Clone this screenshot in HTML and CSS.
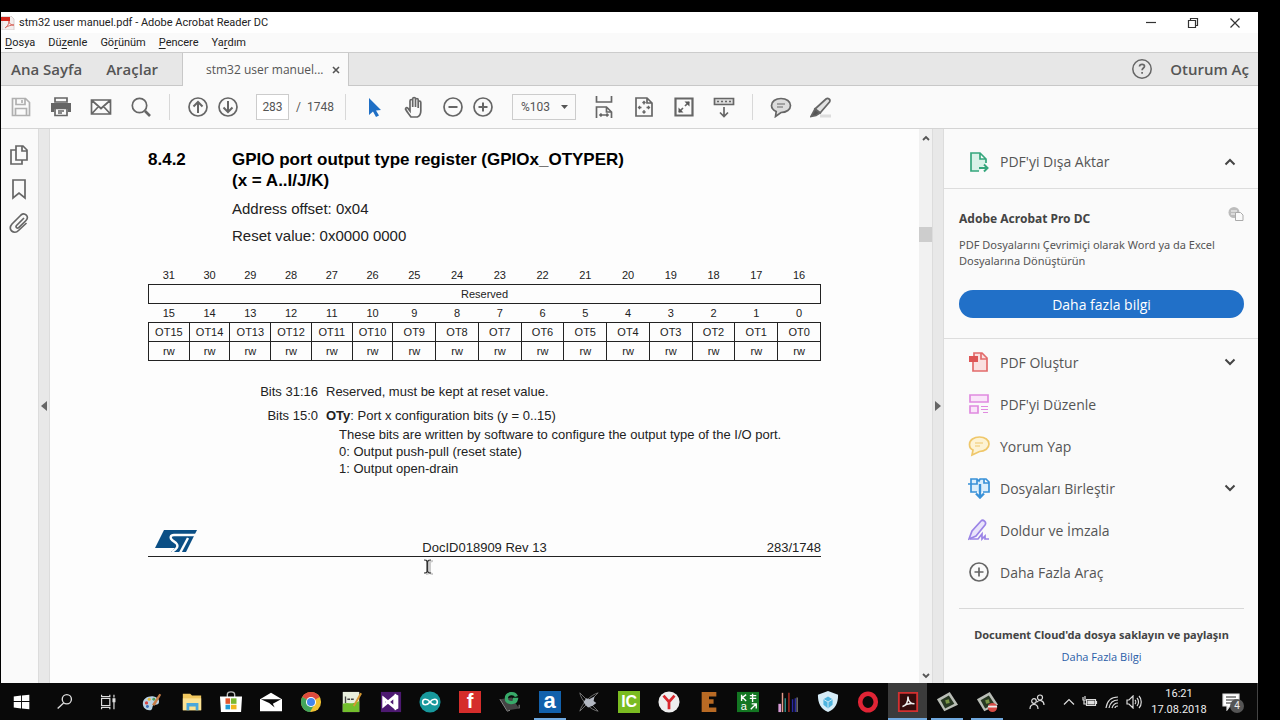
FILE: index.html
```html
<!DOCTYPE html>
<html lang="tr">
<head>
<meta charset="utf-8">
<title>stm32 user manuel.pdf - Adobe Acrobat Reader DC</title>
<link rel="stylesheet" href="styles.css">
</head>
<body>
<div class="window">
  <header class="titlebar">
    <svg class="app-icon" width="14" height="14" viewBox="0 0 14 14"><path d="M1 0h9l3 3v11H1z" fill="#f3eeee" stroke="#d8cfcf"/><path d="M0 1h9v4H0z" fill="#d5281d"/><path d="M4 12c2-1 4-4 4-7 0 3 2 4 5 4-3 0-6 1-8 2" fill="none" stroke="#d9685f"/></svg>
    <span class="title">stm32 user manuel.pdf - Adobe Acrobat Reader DC</span>
    <div class="window-controls">
      <button class="win-btn" aria-label="Simge durumuna küçült"><svg width="12" height="12" viewBox="0 0 12 12"><path d="M1 5.500h10"/></svg></button>
      <button class="win-btn" aria-label="Geri yükle"><svg width="12" height="12" viewBox="0 0 12 12"><path d="M1.500 3.500h7v7h-7zM3.500 3.500v-2h7v7h-2"/></svg></button>
      <button class="win-btn" aria-label="Kapat"><svg width="12" height="12" viewBox="0 0 12 12"><path d="M1.500 1.500l9 9M10.500 1.500l-9 9"/></svg></button>
    </div>
  </header>
  <nav class="menubar">
    <button class="menu"><u>D</u>osya</button>
    <button class="menu">Dü<u>z</u>enle</button>
    <button class="menu">Gö<u>r</u>ünüm</button>
    <button class="menu"><u>P</u>encere</button>
    <button class="menu">Ya<u>r</u>dım</button>
  </nav>
  <div class="tabbar">
    <div class="home-tabs">
      <button class="home-tab">Ana Sayfa</button>
      <button class="home-tab">Araçlar</button>
    </div>
    <div class="doc-tab">
      <span>stm32 user manuel...</span>
      <button class="close-tab" aria-label="Sekmeyi kapat"><svg width="8" height="8" viewBox="0 0 8 8"><path d="M1 1l6 6M7 1l-6 6" stroke="#555" stroke-width="1.600"/></svg></button>
    </div>
    <div class="account">
      <button class="icon-btn" aria-label="Yardım"><svg width="22" height="22" viewBox="0 0 22 22" fill="none" stroke="#666" stroke-width="1.500"><circle cx="11" cy="11" r="9.200"/><path d="M8.500 8.500c.2-3 5-2.800 5-.2 0 1.700-2.400 1.800-2.400 4M11.100 14v1.700" stroke-width="1.700"/></svg></button>
      <button class="sign-in">Oturum Aç</button>
    </div>
  </div>
  <div class="toolbar">
    <button class="tool dim" aria-label="Kaydet"><svg viewBox="0 0 22 22"><path d="M2.500 2.500h13l4 4v13h-17zM6 2.500v6h9v-6M12 4v3M5.500 19.500v-7h11v7"/></svg></button>
    <button class="tool" aria-label="Yazdır"><svg viewBox="0 0 22 22"><path d="M5 2h12v4H5z"/><path d="M1 7h20v9h-3v-3H4v3H1z" fill="#666" stroke="none"/><path d="M5 12.500h12v7H5z" fill="#fafafa"/><path d="M8 15h6M8 17h4"/></svg></button>
    <button class="tool" aria-label="E-posta"><svg viewBox="0 0 22 22"><path d="M1.500 4h19v14h-19zM2 4.500l9 8 9-8M2 17.500l6.500-7M20 17.500l-6.500-7"/></svg></button>
    <button class="tool" aria-label="Bul"><svg viewBox="0 0 22 22"><circle cx="9.500" cy="9.500" r="7.200"/><path d="M15 15l5 5" stroke-width="2.600"/></svg></button>
    <span class="sep sep-page"></span>
    <button class="tool narrow" aria-label="Önceki sayfa"><svg viewBox="0 0 22 22"><circle cx="11" cy="11" r="9"/><path d="M11 17V6M6.500 10.500L11 6l4.500 4.500" stroke-width="2"/></svg></button>
    <button class="tool narrow" aria-label="Sonraki sayfa"><svg viewBox="0 0 22 22"><circle cx="11" cy="11" r="9"/><path d="M11 5v11M6.500 11.500L11 16l4.500-4.500" stroke-width="2"/></svg></button>
    <input class="page-input" id="page" type="text" value="283" aria-label="Sayfa">
    <label class="page-total" for="page">/&nbsp; 1748</label>
    <span class="sep sep-select"></span>
    <button class="tool" aria-label="Seç"><svg viewBox="0 0 22 22"><path d="M5 2l12 12-5 .5 3 5-3 1.500-3-5.500L5 19z" fill="#1f6fc5" stroke="none"/></svg></button>
    <button class="tool" aria-label="El"><svg viewBox="0 0 22 22"><path d="M7 21c-2-3-4-5-5.500-8 .5-2 2-1.500 3 0l1.500 2V5c0-2 2.700-2 2.700 0v6V3c0-2 2.800-2 2.800 0v8V4c0-2 2.700-2 2.700 0v8V6.500c0-2 2.600-2 2.600 0V15c0 3-1 5-3.500 6z"/></svg></button>
    <button class="tool narrow zoom-out" aria-label="Uzaklaştır"><svg viewBox="0 0 22 22"><circle cx="11" cy="11" r="9"/><path d="M6.500 11h9" stroke-width="2"/></svg></button>
    <button class="tool narrow" aria-label="Yakınlaştır"><svg viewBox="0 0 22 22"><circle cx="11" cy="11" r="9"/><path d="M6.500 11h9M11 6.500v9" stroke-width="2"/></svg></button>
    <div class="zoom-box">
      <select class="zoom-select" aria-label="Yakınlaştırma"><option>%103</option></select>
      <svg class="zoom-arrow" width="7" height="4" viewBox="0 0 7 4"><path d="M0 0h7L3.500 4z" fill="#555"/></svg>
    </div>
    <button class="tool" aria-label="Genişliğe sığdır"><svg viewBox="0 0 22 22"><path d="M3.500 0v6h15V0M3.500 22V11h10l5 5v6M13.500 11v5h5M7 19h8M8.500 17.500L7 19l1.500 1.500M13.500 17.500L15 19l-1.500 1.500"/></svg></button>
    <button class="tool" aria-label="Sayfaya sığdır"><svg viewBox="0 0 22 22"><path d="M3 2h11l5 5v13H3zM14 2v5h5"/><path d="M11 5.500v3M11 14v3M5.500 11.500h3M13.500 11.500h3M9.500 7L11 5.500 12.500 7M9.500 15.500L11 17l1.500-1.500M7 10l-1.500 1.500L7 13M15 10l1.500 1.500L15 13" stroke-width="1.300"/></svg></button>
    <button class="tool" aria-label="Tam ekran"><svg viewBox="0 0 22 22"><path d="M2.500 2.500h17v17h-17z" stroke-width="2.200"/><path d="M12 10l4-4M10 12l-4 4"/><path d="M11.500 5.500h5v5zM5.500 11.500v5h5z" fill="#555" stroke="none"/></svg></button>
    <button class="tool" aria-label="Araç çubuğu"><svg viewBox="0 0 22 22"><path d="M1.500 2.500h19v6h-19z" fill="#ddd"/><path d="M4 5.500h14" stroke-dasharray="2 2"/><path d="M11 11v9M7 16.500l4 4 4-4"/></svg></button>
    <span class="sep sep-comment"></span>
    <button class="tool" aria-label="Yorum"><svg viewBox="0 0 22 22"><path d="M11 2.500c5.500 0 9.500 3 9.500 7s-4 7-9.500 7l-5.500 4 .7-5C3 14 1.500 12 1.500 9.500c0-4 4-7 9.500-7z" fill="#dcdcdc"/><path d="M7 8h8M7 11h6" stroke-width="1.200"/></svg></button>
    <button class="tool" aria-label="Vurgula"><svg viewBox="0 0 22 22"><path d="M10 20h11" stroke="#ddd" stroke-width="3"/><path d="M5 13L16 3c2-1.500 5 .5 3.500 3L10 17z" fill="#e2e2e2"/><path d="M5 13l5 4-4 2.500-5 1z" fill="#555"/></svg></button>
  </div>
  <div class="workspace">
    <aside class="rail">
      <button class="rail-btn" aria-label="Sayfa küçük resimleri"><svg viewBox="0 0 22 22"><path d="M8 2h7l4 4v10H8zM14 2v5h5M8 6H3v14h11v-4"/></svg></button>
      <button class="rail-btn" aria-label="Yer imleri"><svg viewBox="0 0 22 22"><path d="M5 2h12v18l-6-5-6 5z"/></svg></button>
      <button class="rail-btn" aria-label="Ekler"><svg viewBox="0 0 22 22"><path d="M16 6L8.500 13.500c-1.500 1.500.8 3.500 2.200 2.200L18 8.500c4-4-1.500-8.500-5-5.500L4 12c-5 5.500 2 11 6.500 6.500L18.500 11"/></svg></button>
    </aside>
    <button class="gutter" aria-label="Gezinti bölmesini aç"><svg width="6" height="10" viewBox="0 0 6 10"><path d="M6 0v10L0 5z" fill="#666"/></svg></button>
    <main class="page">
      <section class="section">
        <div class="section-number">8.4.2</div>
        <div class="section-text">
          <h1>GPIO port output type register (GPIOx_OTYPER)<br>(x = A..I/J/K)</h1>
          <p>Address offset: 0x04</p>
          <p>Reset value: 0x0000 0000</p>
        </div>
      </section>
      <table class="register">
        <colgroup><col class="high" span="6"><col class="low" span="10"></colgroup>
        <tr class="nums"><td>31</td><td>30</td><td>29</td><td>28</td><td>27</td><td>26</td><td>25</td><td>24</td><td>23</td><td>22</td><td>21</td><td>20</td><td>19</td><td>18</td><td>17</td><td>16</td></tr>
        <tr class="cells"><td colspan="16">Reserved</td></tr>
        <tr class="nums"><td>15</td><td>14</td><td>13</td><td>12</td><td>11</td><td>10</td><td>9</td><td>8</td><td>7</td><td>6</td><td>5</td><td>4</td><td>3</td><td>2</td><td>1</td><td>0</td></tr>
        <tr class="cells"><td>OT15</td><td>OT14</td><td>OT13</td><td>OT12</td><td>OT11</td><td>OT10</td><td>OT9</td><td>OT8</td><td>OT7</td><td>OT6</td><td>OT5</td><td>OT4</td><td>OT3</td><td>OT2</td><td>OT1</td><td>OT0</td></tr>
        <tr class="cells"><td>rw</td><td>rw</td><td>rw</td><td>rw</td><td>rw</td><td>rw</td><td>rw</td><td>rw</td><td>rw</td><td>rw</td><td>rw</td><td>rw</td><td>rw</td><td>rw</td><td>rw</td><td>rw</td></tr>
      </table>
      <dl class="bits">
        <dt>Bits 31:16</dt><dd>Reserved, must be kept at reset value.</dd>
        <dt>Bits 15:0</dt><dd><b>OTy</b>: Port x configuration bits (y = 0..15)
          <div class="detail">These bits are written by software to configure the output type of the I/O port.<br>0: Output push-pull (reset state)<br>1: Output open-drain</div></dd>
      </dl>
      <footer class="page-footer">
        <svg width="42" height="24" viewBox="0 0 42 24"><path d="M9 1h33L31 23H16l4-4H0z" fill="#0b4f85"/><path d="M42 6H19c-4 0-4 3-2 5l4 3c3 3 1 6-4 9" fill="none" stroke="#fdfdfd" stroke-width="2.400"/><path d="M33 9l-8 15" stroke="#fdfdfd" stroke-width="2.400"/></svg>
        <span>DocID018909 Rev 13</span>
        <span class="page-number">283/1748</span>
      </footer>
      <svg class="text-cursor" width="12" height="18" viewBox="0 0 12 18"><path d="M4 3c2 0 3 1 3 2v9c0 1-1 2-3 2M11 3C9 3 8 4 8 5v9c0 1 1 2 3 2" fill="none" stroke="#ccc" stroke-width="2"/><path d="M2 2c2 0 3 0 3 1.500v10C5 15 4 15 2 15M9 2C7 2 6 2 6 3.500M6 13.500C6 15 7 15 9 15M5.500 3v11" fill="none" stroke="#333" stroke-width="1.200"/></svg>
    </main>
    <div class="scrollbar">
      <svg width="8" height="6" viewBox="0 0 8 6"><path d="M1 5l3-3 3 3" fill="none" stroke="#555" stroke-width="1.800"/></svg>
      <span class="thumb"></span>
      <svg class="down" width="8" height="6" viewBox="0 0 8 6"><path d="M1 1l3 3 3-3" fill="none" stroke="#555" stroke-width="1.800"/></svg>
    </div>
    <button class="gutter" aria-label="Araçlar bölmesini gizle"><svg width="6" height="10" viewBox="0 0 6 10"><path d="M0 0v10l6-5z" fill="#666"/></svg></button>
    <aside class="panel">
      <button class="tool-row export">
        <svg class="tool-icon" viewBox="0 0 22 22" stroke="#35a67c"><path d="M11 20H3V2h9l6 6v4M12 2v6h6" fill="#d9f2e8"/><path d="M11 17h8M16 13.500l3.500 3.500-3.500 3.500" stroke-width="2"/></svg>
        <span>PDF'yi Dışa Aktar</span>
        <svg class="chevron" viewBox="0 0 12 8"><path d="M1.500 6.500L6 2l4.500 4.500"/></svg>
      </button>
      <section class="promo">
        <div class="promo-head"><h2>Adobe Acrobat Pro DC</h2>
          <svg width="16" height="14" viewBox="0 0 16 14"><circle cx="6" cy="5.500" r="5.500" fill="#bcbcbc"/><path d="M3 4h6M3 7h5" stroke="#fafafa"/><path d="M7.500 5.500h5l2.500 2.500v5.500H7.500z" fill="#fafafa" stroke="#aaa"/></svg>
        </div>
        <p>PDF Dosyalarını Çevrimiçi olarak Word ya da Excel Dosyalarına Dönüştürün</p>
        <button class="primary">Daha fazla bilgi</button>
      </section>
      <div class="tool-list">
        <button class="tool-row"><svg class="tool-icon" viewBox="0 0 22 22" stroke="#e26b6b"><path d="M5 10v10h14V7l-5-5H6v3M13 2v6h6" fill="#fae0e0"/><path d="M1 5h9v6H1z" fill="#dd5555" stroke="none"/></svg><span>PDF Oluştur</span><svg class="chevron" viewBox="0 0 12 8"><path d="M1.500 1.500L6 6l4.500-4.500"/></svg></button>
        <button class="tool-row"><svg class="tool-icon" viewBox="0 0 22 22" stroke="#e08be0"><path d="M2 2h18v7H2zM2 13h8v7H2z" fill="#fae5fa"/><path d="M13 13.500h7M13 16.500h7M15 19.500h5" stroke-width="1.200"/></svg><span>PDF'yi Düzenle</span></button>
        <button class="tool-row"><svg class="tool-icon" viewBox="0 0 22 22" stroke="#efc76a"><path d="M11.500 2c5.500 0 9.500 3 9.500 7s-4 7.500-9.500 7.500L4 20l1-5C2.500 14 1.500 12 1.500 9.500 1.500 5 6 2 11.500 2z" fill="#fdf3d4"/><path d="M7 8h8M7 11h5" stroke-width="1.200"/></svg><span>Yorum Yap</span></button>
        <button class="tool-row"><svg class="tool-icon" viewBox="0 0 22 22" stroke="#3991d8"><path d="M9 15H3V2h6l2 2 1-2h6l3 3v10h-6M9 2v5H0M16 2v4h5" fill="#dceefb"/><path d="M12 7v12M8 16.500l4 4 4-4" stroke-width="2.400"/></svg><span>Dosyaları Birleştir</span><svg class="chevron" viewBox="0 0 12 8"><path d="M1.500 1.500L6 6l4.500-4.500"/></svg></button>
        <button class="tool-row"><svg class="tool-icon" viewBox="0 0 22 22" stroke="#9a83e6"><path d="M1 20l3-8 9-10c2-2 6 1 4 4L8 17z" fill="#e9e4fb"/><path d="M2 20h8l4-5v5l3-3v3h4"/></svg><span>Doldur ve İmzala</span></button>
        <button class="tool-row"><svg class="tool-icon" viewBox="0 0 22 22" stroke="#666"><circle cx="11" cy="11" r="9"/><path d="M6.500 11h9M11 6.500v9"/></svg><span>Daha Fazla Araç</span></button>
      </div>
      <div class="cloud">
        <strong>Document Cloud'da dosya saklayın ve paylaşın</strong>
        <a href="#">Daha Fazla Bilgi</a>
      </div>
    </aside>
  </div>
</div>
<footer class="taskbar">
  <div class="system">
    <button class="sys" aria-label="Başlat"><svg viewBox="0 0 24 24"><path d="M3 6l8-1v6H3zM12 5l8-1v7h-8zM3 12h8v7l-8-1zM12 12h8v8l-8-1z" fill="#fff"/></svg></button>
    <button class="sys" aria-label="Ara"><svg viewBox="0 0 24 24" fill="none" stroke="#ddd" stroke-width="1.500"><circle cx="14" cy="9" r="5"/><path d="M10.500 13L4 19"/></svg></button>
    <button class="sys" aria-label="Görev görünümü"><svg viewBox="0 0 24 24" fill="none" stroke="#ddd" stroke-width="1.300"><path d="M5 8h9v8H5zM5 4v2h9V4M5 20v-2h9v2M18.500 4v3M18.500 12v8"/><path d="M17.500 8.500h2v3h-2z" fill="#fff"/></svg></button>
  </div>
  <div class="apps">
    <button class="app" aria-label="Paint"><svg viewBox="0 0 24 24"><path d="M2 14c0-6 6-9 12-8 5 1 7 5 5 8-2 2-5 0-6 2s0 5-4 5c-4 0-7-3-7-7z" fill="#b9d2e4"/><circle cx="6" cy="13" r="1.800" fill="#d84444"/><circle cx="9" cy="9" r="1.700" fill="#e3b83a"/><circle cx="14" cy="9" r="1.600" fill="#4c9c5b"/><circle cx="7" cy="17" r="1.600" fill="#3a6fb9"/><path d="M12 15l8-12 2 1-7 12z" fill="#c67c47"/></svg></button>
    <button class="app" aria-label="Dosya Gezgini"><svg viewBox="0 0 24 24"><path d="M2 3h8l2 2h10v16H2z" fill="#f0c75e"/><path d="M2 8h20v13H2z" fill="#fbe294"/><path d="M6 21v-8h13v8h-3v-4H9v4z" fill="#4aa7dc"/></svg></button>
    <button class="app" aria-label="Mağaza"><svg viewBox="0 0 24 24"><path d="M8 8V4c0-4 8-4 8 0v4" fill="none" stroke="#bbb" stroke-width="1.500"/><path d="M0 6h24l-1 17H1z" fill="#fff"/><path d="M6 8h5v6H6z" fill="#e4572e"/><path d="M12 8h6v6h-6z" fill="#7cb82f"/><path d="M6 15h5v5H6z" fill="#239bd7"/><path d="M12 15h6v5h-6z" fill="#f1b61e"/></svg></button>
    <button class="app" aria-label="Posta"><svg viewBox="0 0 24 24"><path d="M0 9L12 2l12 7v13H0z" fill="#fff"/><path d="M1 9h22l-9 5 2 4-6-5z" fill="#090909"/></svg></button>
    <button class="app" aria-label="Chrome"><svg viewBox="0 0 24 24"><circle cx="12" cy="12" r="11" fill="#f1c232"/><path d="M12 12L2.500 6.500A11 11 0 0 1 21.500 6.500z" fill="#de4b3e"/><path d="M2.500 6.500A11 11 0 0 0 11 23l5-9z" fill="#43a55b"/><circle cx="12" cy="12" r="5.500" fill="#fff"/><circle cx="12" cy="12" r="4.400" fill="#4486ed"/></svg></button>
    <button class="app" aria-label="Notepad++"><svg viewBox="0 0 24 24"><path d="M3 1h18v22H3z" fill="#e9efdd"/><path d="M3 14c6-3 10 2 18-3v12H3z" fill="#73bf2d"/><path d="M6 6v7M8 9h3M12 9h3" stroke="#444" stroke-width="1.500"/><path d="M14 16l8-14 2 1-8 14z" fill="#d59832"/></svg></button>
    <button class="app" aria-label="Visual Studio"><svg viewBox="0 0 24 24"><path d="M1 1h22v22H1z" fill="#4d1971"/><path d="M4 8l12 10V6L4 16z" fill="none" stroke="#fff" stroke-width="3"/><path d="M16 3l4 2v14l-4 2z" fill="#fff"/></svg></button>
    <button class="app" aria-label="Arduino"><svg viewBox="0 0 24 24"><circle cx="12" cy="12" r="11.500" fill="#17989c"/><path d="M12 12C9 8 4 8 4 12s5 4 8 0 8-4 8 0-5 4-8 0z" fill="none" stroke="#fff" stroke-width="1.700"/></svg></button>
    <button class="app" aria-label="Fritzing"><span class="tile tile-f">f</span></button>
    <button class="app" aria-label="Code Composer"><svg viewBox="0 0 24 24"><path d="M1 9l8 12 13-2-8-12z" fill="#444"/><path d="M1 9l8 13 3-1M22 15v4" stroke="#999" fill="none"/><path d="M19 6c-2-5-11-4-11 2s10 6 11 1h-4" fill="none" stroke="#38a969" stroke-width="3.500"/></svg></button>
    <button class="app open" aria-label="Atollic"><span class="tile tile-a">a</span></button>
    <button class="app" aria-label="Devre"><svg viewBox="0 0 24 24"><path d="M2 2l20 20M22 2L2 22M2 2c1 8 12 19 20 20M22 2C14 4 4 14 2 22" stroke="#777" fill="none"/><path d="M6 12l3-4 3 1 6-3-1 5 3 2-4 3-5 2-3-3z" fill="#b2b7c1"/></svg></button>
    <button class="app" aria-label="IC"><span class="tile tile-c">IC</span></button>
    <button class="app" aria-label="Yandex"><svg viewBox="0 0 24 24"><circle cx="12" cy="12" r="11.500" fill="#eee"/><path d="M6 5l6 7 6-7M12 12v8" fill="none" stroke="#d8272d" stroke-width="3"/></svg></button>
    <button class="app" aria-label="Eagle"><svg viewBox="0 0 24 24"><path d="M4 1h16v5h-8v3h5v5h-5v4h8v5H4z" fill="#b86a24"/></svg></button>
    <button class="app" aria-label="Çeviri"><svg viewBox="0 0 24 24"><path d="M0 1h24v22H0z" fill="#137622"/><path d="M5 4v7M10 4L6 7l4 4M14 5h7M17 3v9M14 8h7M15 20l6-6M16 14h5v5" stroke="#fff" stroke-width="1.500" fill="none"/><text x="4" y="21" class="glyph">a</text></svg></button>
    <button class="app" aria-label="Logic"><svg viewBox="0 0 24 24" fill="none" stroke-width="1.600"><path d="M3 14v9" stroke="#d79bd7" stroke-width="3"/><path d="M6 2v21" stroke="#e59b8b"/><path d="M9 8v15" stroke="#2e8d89"/><path d="M13 2v21" stroke="#a52d24"/><path d="M17 9v14M20 8v15" stroke="#2929a0"/><path d="M22 7v16" stroke="#777"/></svg></button>
    <button class="app" aria-label="Güvenlik"><svg viewBox="0 0 24 24"><path d="M12 0l11 4c0 10-3 15-11 19C4 19 1 14 1 4z" fill="#d6ecf7"/><path d="M12 6l5 3v6l-5 4-5-4V9z" fill="#50b5df"/><path d="M7 9l5 3 5-3M12 12v7" stroke="#d6ecf7" fill="none"/></svg></button>
    <button class="app" aria-label="Opera"><svg viewBox="0 0 24 24"><ellipse cx="12" cy="12" rx="8.500" ry="9" fill="none" stroke="#e02435" stroke-width="5"/></svg></button>
    <button class="app open active" aria-label="Acrobat Reader"><svg viewBox="0 0 24 24"><path d="M2 2h20v20H2z" fill="#330c0c" stroke="#d33030" stroke-width="2"/><path d="M6 17c4-1 6-6 6-11 0 5 3 8 7 8-5-1-9 0-13 3" fill="none" stroke="#eee" stroke-width="1.600"/></svg></button>
    <button class="app open" aria-label="Kaydedici"><svg viewBox="0 0 24 24"><path d="M1 9l14-8 9 14-15 7z" fill="#b9bdb6"/><path d="M5 10l9-5 6 9-10 5z" fill="#273722"/><path d="M10 10l4-1 1 4-4 1z" fill="#789345"/></svg></button>
    <button class="app open" aria-label="Kaydedici kayıtta"><svg viewBox="0 0 24 24"><path d="M1 9l14-8 9 14-15 7z" fill="#b9bdb6"/><path d="M5 10l9-5 6 9-10 5z" fill="#273722"/><path d="M10 10l4-1 1 4-4 1z" fill="#789345"/><circle cx="18" cy="18" r="5" fill="#d64b45"/><path d="M13 17h10" stroke="#eee" stroke-width="2"/></svg></button>
  </div>
  <div class="tray">
    <svg class="people" width="16" height="16" viewBox="0 0 16 16"><circle cx="5" cy="7" r="2.300"/><path d="M1 15c0-6 8-6 8 0"/><circle cx="11" cy="3.500" r="2.500"/><path d="M8 8c3-3 7-1 7 3"/></svg>
    <svg class="up" width="12" height="8" viewBox="0 0 12 8"><path d="M1 6.500l5-5 5 5"/></svg>
    <svg width="16" height="12" viewBox="0 0 16 12"><path d="M4.500 3.500h9v6h-9zM14.500 5v3M1 1v3h3M3 0v3M2 4v4h2"/><path d="M6 5h6v3H6z" fill="#ddd"/></svg>
    <svg width="14" height="14" viewBox="0 0 14 14"><path d="M1 13C2 6 6 2 13 2M4 13c1-5 4-8 9-8M7 13c1-3 3-5 6-5M10 13c0-1 1-2 3-2"/></svg>
    <svg width="16" height="14" viewBox="0 0 16 14"><path d="M1 5h2l4-4v12L3 9H1zM9 5c1 1 1 3 0 4M11 3c2 2 2 6 0 8M13 1c3 3 3 9 0 12"/></svg>
    <div class="clock"><time>16:21</time><span>17.08.2018</span></div>
    <button class="notice" aria-label="Bildirimler"><svg width="18" height="18" viewBox="0 0 18 18"><path d="M1 1h16v12H8l-3 4v-4H1z" fill="#fff"/><path d="M4 4h10M4 7h10M4 10h6" stroke="#222"/></svg><span class="badge">4</span></button>
  </div>
</footer>
</body>
</html>
```
FILE: styles.css
```css
* { box-sizing: border-box; }
body {
  margin: 0;
  min-height: 100vh;
  display: flex;
  flex-direction: column;
  background: #000;
  color: #555;
  font-family: "Open Sans", "Noto Sans", sans-serif;
  font-size: 11px;
}
button, input, select {
  margin: 0;
  padding: 0;
  border: 0;
  background: none;
  color: inherit;
  font: inherit;
}
svg { display: block; flex: none; }
p, h1, h2, dl, dd { margin: 0; }

.window {
  flex: 1;
  display: flex;
  flex-direction: column;
  margin: 12px 22px 0 1px;
  background: #fafafa;
}
.titlebar, .menubar, .toolbar, .taskbar { font-family: Roboto, "Noto Sans", sans-serif; }
.titlebar {
  display: flex;
  align-items: center;
  height: 21px;
  background: #fff;
  color: #222;
}
.title { flex: 1; margin-left: 4px; }
.window-controls { display: flex; padding-right: 2px; }
.win-btn {
  display: grid;
  place-items: center;
  width: 42px;
  height: 20px;
}
.win-btn svg { fill: none; stroke: #333; stroke-width: 1.2; }
.menubar {
  display: flex;
  gap: 13px;
  height: 19px;
  padding-left: 4px;
  color: #222;
}
.menu { line-height: 18px; }
.menu u { text-underline-offset: 2px; }

.tabbar {
  display: flex;
  height: 34px;
  background: #e7e7e7;
  border-top: 1px solid #ccc;
}
.home-tabs {
  display: flex;
  gap: 24px;
  width: 181px;
  padding-left: 10px;
  border-bottom: 1px solid #c8c8c8;
}
.home-tab, .sign-in {
  font-size: 15px;
  font-weight: 600;
  white-space: nowrap;
}
.doc-tab {
  display: flex;
  align-items: center;
  justify-content: space-between;
  width: 167px;
  padding: 0 8px 0 23px;
  border: solid #c8c8c8;
  border-width: 0 1px;
  background: #fafafa;
  font-size: 12px;
}
.account {
  flex: 1;
  display: flex;
  align-items: center;
  justify-content: flex-end;
  gap: 17px;
  padding-right: 9px;
  border-bottom: 1px solid #c8c8c8;
}

.toolbar {
  display: flex;
  align-items: center;
  height: 43px;
  border-bottom: 1px solid #d4d4d4;
  font-size: 12px;
}
.tool {
  display: grid;
  place-items: center;
  width: 40px;
  height: 30px;
}
.tool svg, .rail-btn svg {
  width: 22px;
  height: 22px;
  fill: none;
  stroke: #666;
  stroke-width: 1.7;
}
.dim svg { stroke: #b0b0b0; }
.narrow { width: 30px; }
.sep { width: 1px; height: 26px; background: #d8d8d8; }
.sep-page { margin: 0 13px 0 8px; }
.sep-select { margin: 0 9px 0 16px; }
.sep-comment { margin: 0 8px; }
.page-input {
  width: 33px;
  height: 26px;
  margin: 0 7px 0 13px;
  border: 1px solid #ccc;
  background: #fff;
  text-align: center;
}
.page-total { width: 33px; white-space: nowrap; }
.zoom-out { margin-left: 3px; }
.zoom-box {
  display: grid;
  align-items: center;
  width: 64px;
  height: 26px;
  margin: 0 8px 0 14px;
  border: 1px solid #ccc;
}
.zoom-select, .zoom-arrow { grid-area: 1 / 1; }
.zoom-select {
  appearance: none;
  width: 100%;
  height: 100%;
  padding-left: 8px;
}
.zoom-arrow { justify-self: end; margin-right: 7px; pointer-events: none; }

.workspace { flex: 1; display: flex; }
.rail {
  display: flex;
  flex-direction: column;
  gap: 12px;
  width: 37px;
  padding: 15px 7px;
}
.rail-btn { height: 22px; }
.gutter {
  display: grid;
  place-items: center;
  width: 12px;
  border: solid #dcdcdc;
  border-width: 0 1px;
  background: #e8e8e8;
}
.page {
  position: relative;
  flex: 1;
  padding: 20px 98px 0;
  background: #fdfdfd;
  color: #222;
  font-family: "Liberation Sans", Arial, sans-serif;
  font-size: 13px;
  line-height: 17px;
}
.section { display: flex; }
.section-number, h1 {
  color: #000;
  font-size: 17px;
  font-weight: bold;
  line-height: 21px;
}
.section-number { width: 84px; }
.section-text p { margin-top: 7px; font-size: 15px; line-height: 20px; }
.section-text h1 { margin-bottom: 8px; }
.register {
  width: 100%;
  margin-top: 20px;
  border-collapse: collapse;
  table-layout: fixed;
  font-size: 11px;
  line-height: 18px;
  text-align: center;
}
.register td { padding: 0; }
.register .cells td { border: 1px solid #222; }
.high { width: 6.06%; }
.low { width: 6.36%; }
.bits {
  display: grid;
  grid-template-columns: 170px 1fr;
  gap: 7px 8px;
  margin-top: 22px;
}
.bits dt { text-align: right; }
.detail { margin: 2px 0 0 13px; }
.page-footer {
  display: grid;
  grid-template-columns: 1fr auto 1fr;
  align-items: end;
  height: 29px;
  margin-top: 51px;
  border-bottom: 1px solid #222;
}
.page-footer svg { margin: 0 0 3px 7px; }
.page-number { text-align: right; }
.text-cursor { position: absolute; left: 372px; top: 429px; }
.scrollbar {
  display: flex;
  flex-direction: column;
  align-items: center;
  width: 13px;
  padding: 6px 0 4px;
  background: #f1f1f1;
}
.thumb { width: 13px; height: 15px; margin-top: 86px; background: #cdcdcd; }
.down { margin-top: auto; }

.panel { width: 314px; }
.tool-row {
  display: flex;
  align-items: center;
  width: 100%;
  height: 42px;
  padding: 0 22px 0 24px;
  font-size: 14px;
  text-align: left;
}
.tool-row span { flex: 1; margin-left: 10px; }
.tool-icon { width: 22px; height: 22px; fill: none; stroke-width: 1.7; }
.chevron { width: 12px; height: 8px; fill: none; stroke: #444; stroke-width: 2; }
.export { height: 60px; padding-top: 6px; border-bottom: 1px solid #ddd; }
.promo { padding: 18px 14px 20px 15px; border-bottom: 1px solid #ddd; }
.promo-head { display: flex; justify-content: space-between; }
h2, .promo p, .cloud strong { font-family: "Noto Sans", sans-serif; }
h2 { color: #444; font-size: 12px; font-weight: bold; line-height: 24px; }
.promo p { margin-top: 6px; line-height: 16px; }
.primary {
  width: 100%;
  height: 28px;
  margin-top: 21px;
  border-radius: 14px;
  background: #2170c8;
  color: #fff;
  font-size: 14px;
}
.tool-list { padding-top: 2px; }
.cloud {
  display: flex;
  flex-direction: column;
  align-items: center;
  gap: 6px;
  margin: 15px 14px 0 15px;
  padding-top: 18px;
  border-top: 1px solid #d8d8d8;
  line-height: 16px;
}
.cloud strong { color: #444; white-space: nowrap; }
.cloud a { color: #2a5ea8; text-decoration: none; }

.taskbar {
  display: flex;
  height: 37px;
  margin-right: 22px;
  border-right: 1px solid #444;
  background: #090909;
  color: #eee;
}
.system { display: flex; width: 132px; }
.sys { display: grid; place-items: center; width: 43px; }
.sys svg { width: 22px; height: 22px; }
.apps {
  flex: 1;
  display: grid;
  grid-template-columns: repeat(22, 1fr);
}
.app {
  display: grid;
  place-items: center;
  margin: 0 4px;
  border: solid transparent;
  border-width: 2px 0;
}
.app svg { width: 22px; height: 22px; }
.open { border-bottom-color: #70a9df; }
.active { margin: 0; background: #3b3b3b; border-top-color: #3b3b3b; }
.tile {
  width: 22px;
  height: 22px;
  color: #fff;
  font-family: "Liberation Sans", sans-serif;
  font-weight: bold;
  line-height: 20px;
}
.tile-f { background: #d52d2b; font-size: 20px; }
.tile-a { background: #1261ac; font-size: 22px; }
.tile-c { background: #7abb21; font-size: 16px; line-height: 22px; }
.glyph { fill: #fff; font: 12px "Liberation Sans", sans-serif; }
.tray {
  display: flex;
  align-items: center;
  gap: 7px;
  width: 250px;
  padding-left: 22px;
}
.tray svg { fill: none; stroke: #ddd; stroke-width: 1.2; }
.people { margin-right: 11px; }
.clock {
  display: flex;
  flex-direction: column;
  align-items: center;
  width: 56px;
  margin-left: 2px;
  font-size: 11px;
  line-height: 16px;
}
.notice { position: relative; margin-left: 8px; }
.badge {
  position: absolute;
  left: 8px;
  top: 6px;
  width: 14px;
  height: 14px;
  border-radius: 7px;
  background: #555;
  font-size: 10px;
  line-height: 14px;
}
```
